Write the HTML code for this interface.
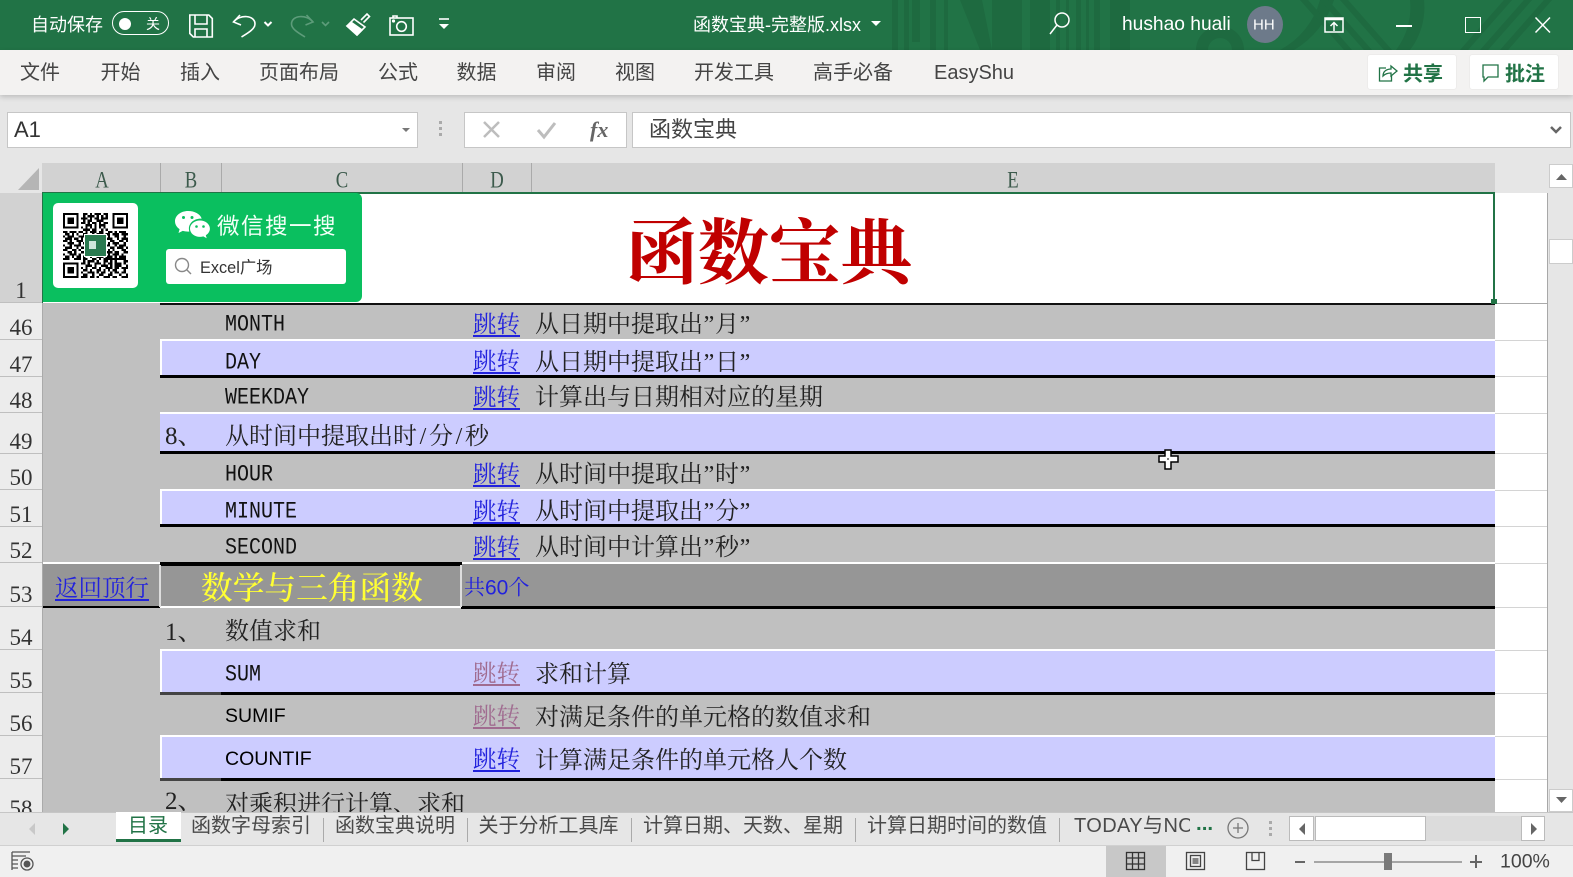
<!DOCTYPE html>
<html lang="zh"><head><meta charset="utf-8"><title>函数宝典-完整版.xlsx</title>
<style>
html,body{margin:0;padding:0;width:1573px;height:877px;overflow:hidden;background:#e6e6e6}
body{position:relative;font-family:"Liberation Sans","Noto Sans CJK SC",sans-serif}
div,span,a,svg{position:absolute;display:block}
span span{position:static;display:inline}
span .h{display:inline-block;width:12px;text-align:center}
.t{white-space:nowrap;transform:translateY(-50%)}
.rb{font-size:20px;color:#444;top:73px;line-height:28px}
.tb{font-size:20px;color:#4a4a4a;top:826px;line-height:28px}
.sep{top:818px;width:1px;height:24px;background:#aaa}
.hd{font-family:"Liberation Serif","Noto Serif CJK SC",serif;font-size:22px;color:#3c5a4c;top:180px;transform:translate(-50%,-50%) scale(.85,1.05);line-height:24px}
.rn{left:0;width:42px;text-align:center;font-family:"Liberation Serif",serif;font-size:23px;color:#333;background:#ececec;box-sizing:border-box;border-bottom:1px solid #bfbfbf;display:flex;align-items:flex-end;justify-content:center;line-height:23px;padding-bottom:0}
.g{left:42px;width:1453px;background:#c0c0c0}
.l{left:160px;width:1335px;background:#ccccff}
.k{background:#000;height:3px;left:160px;width:1335px}
.w{background:#fff;height:2px;left:160px;width:1335px}
.c{font-family:"Liberation Serif","Noto Serif CJK SC",serif;font-size:24px;color:#222;white-space:nowrap;transform:translateY(-50%);line-height:30px}
.m{font-family:"Liberation Mono",monospace;font-size:20px;color:#111;left:225px;white-space:nowrap;transform:translateY(-50%) scaleY(1.15);line-height:26px}
.a{font-family:"Liberation Sans",sans-serif;font-size:19.500px;color:#000;left:225px;white-space:nowrap;transform:translateY(-50%);line-height:26px}
.j{font-family:"Noto Serif CJK SC",serif;font-size:23.500px;color:#2222dd;left:473px;text-decoration:underline;text-underline-offset:3px;white-space:nowrap;transform:translateY(-50%);line-height:30px}
.v{color:#a06c90}
.d{left:535px}
.gl{left:1495px;width:52px;height:1px;background:#d4d4d4}
</style></head><body>

<!-- title bar -->
<div style="left:0;top:0;width:1573px;height:50px;background:#217346;overflow:hidden">
<svg width="1573" height="50" style="left:0;top:0" fill="#1e6a40">
<path d="M892 0h6v50h-6zM904 0h5v50h-5zM912 0h8v42h-8zM930 0h6v50h-6zM944 0h4v50h-4zM960 0h22l10 50h-12z"/>
<path d="M992 0h30v50h-30zM1030 0h20v50h-20zM1056 0h4v50h-4zM1066 0h3v50h-3zM1076 0h5v50h-5zM1086 0h3v50h-3zM1094 0h6v50h-6zM1110 0h20v50h-20z"/>
<path d="M1196 50a24 24 0 0 1 48 0h-12a12 12 0 0 0-24 0z"/>
<path d="M1280 50a80 80 0 0 0 40-50h14a90 90 0 0 1-40 50zM1410 0h14a70 70 0 0 1-14 50h-14a70 70 0 0 0 14-50z"/>
<path d="M1300 0h8l44 50h-8zM1320 0h8l44 50h-8zM1340 0h8l44 50h-8zM1460 50l44-50h8l-44 50zM1480 50l44-50h8l-44 50zM1500 50l44-50h8l-44 50z"/>
</svg>
</div>
<span class="t" style="left:31px;top:24px;font-size:18px;color:#fff">自动保存</span>
<div style="left:112px;top:11px;width:55px;height:22px;border:1.500px solid #fff;border-radius:13px"></div>
<div style="left:119px;top:18px;width:12px;height:12px;border-radius:50%;background:#fff"></div>
<span class="t" style="left:146px;top:24px;font-size:14px;color:#fff">关</span>
<svg width="470" height="50" style="left:0;top:0" fill="none" stroke="#fff" stroke-width="1.600">
<path d="M189.800 15h19l3.500 3.500V37h-19l-3.500-3.500z"/><path d="M195 15v9h12v-9M195 37v-8h12v8"/>
<path d="M240 15l-6.500 7 7.500 3"/><path d="M233.500 22C240 14 255 15 255 24c0 5-7 9-13.500 13"/>
<path d="M264.500 22l3.500 3.500 3.500-3.500" stroke-width="2"/>
<g stroke="#5d9c7a"><path d="M306.500 15l6.500 7-7.500 3"/><path d="M313 22C306.500 14 291.500 15 291.500 24c0 5 7 9 13.500 13"/><path d="M322 22l3.500 3.500 3.500-3.500" stroke-width="1.600"/></g>
<path d="M361 20l6-6 2.500 2.500-6 6M354 19l11 8M347 26l7-7 11 8-8 8z" fill="none"/><path d="M347 26l5-3 10 7-5 5z" fill="#fff"/>
<rect x="390" y="18" width="23" height="17"/><path d="M393 18v-2h4v2"/><circle cx="401.500" cy="26.500" r="4.800"/><circle cx="393.500" cy="21" r=".8" fill="#fff"/>
<path d="M439 19h10" stroke-width="1.600"/><path d="M439 24h10l-5 5z" fill="#fff" stroke="none"/>
</svg>
<span class="t" style="left:693px;top:24px;font-size:18px;color:#fff">函数宝典-完整版.xlsx</span>
<svg width="12" height="8" style="left:870px;top:20px"><path d="M1 1h10l-5 5z" fill="#fff"/></svg>
<svg width="24" height="26" style="left:1048px;top:11px" fill="none" stroke="#fff" stroke-width="1.500"><circle cx="14" cy="9" r="7"/><path d="M9 14L2 23"/></svg>
<span class="t" style="left:1122px;top:24.500px;font-size:19.200px;color:#fff">hushao huali</span>
<div style="left:1247px;top:6px;width:36px;height:37px;border-radius:50%;background:#6d7a8a"></div>
<span class="t" style="left:1253px;top:25px;font-size:15px;color:#fff">HH</span>
<svg width="24" height="20" style="left:1323px;top:14px" fill="none" stroke="#fff" stroke-width="1.500"><rect x="2" y="4" width="18" height="14"/><path d="M2 5h18" stroke-width="2.500"/><path d="M11 17V9M7.500 12l3.500-3.500 3.500 3.500"/></svg>
<div style="left:1396px;top:25px;width:16px;height:2px;background:#fff"></div>
<div style="left:1465px;top:17px;width:14px;height:14px;border:1.500px solid #fff"></div>
<svg width="18" height="18" style="left:1534px;top:16px" fill="none" stroke="#fff" stroke-width="1.500"><path d="M1.500 1.500l14.500 15M16 1.500L1.500 16.500"/></svg>

<!-- ribbon -->
<div style="left:0;top:50px;width:1573px;height:45px;background:#f3f2f1;box-shadow:0 2px 5px rgba(0,0,0,.18)"></div>
<span class="t rb" style="left:20px">文件</span><span class="t rb" style="left:100.500px">开始</span><span class="t rb" style="left:180px">插入</span><span class="t rb" style="left:259px">页面布局</span><span class="t rb" style="left:378px">公式</span><span class="t rb" style="left:456.500px">数据</span><span class="t rb" style="left:536px">审阅</span><span class="t rb" style="left:615px">视图</span><span class="t rb" style="left:694px">开发工具</span><span class="t rb" style="left:813px">高手必备</span><span class="t rb" style="left:934px">EasyShu</span>
<div style="left:1368px;top:55px;width:88px;height:34px;background:#fff;border-radius:2px;box-shadow:0 0 1px #ccc"></div>
<svg width="20" height="20" style="left:1378px;top:63px" fill="none" stroke="#217346" stroke-width="1.300"><path d="M8 5H1.500v13h12v-6"/><path d="M5 13c0-5 4-7 8-7V3l6 5-6 5v-3c-3 0-6 1-8 3z"/></svg>
<span class="t" style="left:1403px;top:71.500px;font-size:20px;font-weight:700;color:#217346">共享</span>
<div style="left:1470px;top:55px;width:88px;height:34px;background:#fff;border-radius:2px;box-shadow:0 0 1px #ccc"></div>
<svg width="20" height="20" style="left:1481px;top:63px" fill="none" stroke="#217346" stroke-width="1.300"><path d="M2 2h15v12H7l-4 4v-4H2z"/></svg>
<span class="t" style="left:1505px;top:71.500px;font-size:20px;font-weight:700;color:#217346">批注</span>

<!-- formula bar -->
<div style="left:7px;top:112px;width:411px;height:36px;box-sizing:border-box;background:#fff;border:1px solid #c6c6c6"></div>
<span class="t" style="left:14px;top:130px;font-size:22px;color:#333">A1</span>
<svg width="10" height="6" style="left:401px;top:127px"><path d="M1 1h8l-4 4z" fill="#777"/></svg>
<div style="left:439px;top:121px;width:3px;height:3px;background:#aaa;box-shadow:0 6px #aaa,0 12px #aaa"></div>
<div style="left:464px;top:112px;width:163px;height:36px;box-sizing:border-box;background:#fff;border:1px solid #c6c6c6"></div>
<svg width="22" height="20" style="left:482px;top:120px" fill="none" stroke="#bdbdbd" stroke-width="2.500"><path d="M2 2l15 15M17 2L2 17"/></svg>
<svg width="22" height="20" style="left:536px;top:120px" fill="none" stroke="#bdbdbd" stroke-width="3"><path d="M2 10l6 7L19 3"/></svg>
<span class="t" style="left:590px;top:130px;font-family:'Liberation Serif',serif;font-style:italic;font-weight:700;font-size:22px;color:#666">fx</span>
<div style="left:632px;top:112px;width:939px;height:36px;box-sizing:border-box;background:#fff;border:1px solid #c6c6c6"></div>
<span class="t" style="left:649px;top:128px;font-size:22px;color:#444">函数宝典</span>
<svg width="14" height="10" style="left:1549px;top:125px" fill="none" stroke="#666" stroke-width="2.500"><path d="M2 2l5 5 5-5"/></svg>

<!-- headers -->
<div style="left:0;top:163px;width:42px;height:30px;background:#e6e6e6"></div>
<svg width="24" height="24" style="left:17px;top:167px"><path d="M22 1v22H1z" fill="#b5b5b5"/></svg>
<div style="left:42px;top:163px;width:1453px;height:30px;background:#d2d2d2"></div>
<div style="left:160px;top:163px;width:1px;height:30px;background:#aaa"></div>
<div style="left:221px;top:163px;width:1px;height:30px;background:#aaa"></div>
<div style="left:462px;top:163px;width:1px;height:30px;background:#aaa"></div>
<div style="left:531px;top:163px;width:1px;height:30px;background:#aaa"></div>
<span class="hd" style="left:101.500px">A</span><span class="hd" style="left:190.500px">B</span><span class="hd" style="left:342px">C</span><span class="hd" style="left:496.500px">D</span><span class="hd" style="left:1013px">E</span>

<!-- right blank column + scrollbar -->
<div style="left:1495px;top:193px;width:52px;height:619px;background:#fff"></div>
<div style="left:1547px;top:193px;width:1px;height:619px;background:#a8a8a8"></div>
<div class="gl" style="top:303px;background:#aaa"></div><div class="gl" style="top:340px"></div><div class="gl" style="top:376px"></div><div class="gl" style="top:413px"></div><div class="gl" style="top:453px"></div><div class="gl" style="top:490px"></div><div class="gl" style="top:526px"></div><div class="gl" style="top:563px"></div><div class="gl" style="top:607px"></div><div class="gl" style="top:650px"></div><div class="gl" style="top:693px"></div><div class="gl" style="top:736px"></div><div class="gl" style="top:779px"></div>
<div style="left:1549px;top:164px;width:24px;height:24px;background:#fff;border:1px solid #ccc;box-sizing:border-box"></div>
<svg width="12" height="8" style="left:1556px;top:173px"><path d="M0 7h11L5.500 1z" fill="#666"/></svg>
<div style="left:1549px;top:239px;width:24px;height:25px;background:#fff;border:1px solid #ccc;box-sizing:border-box"></div>
<div style="left:1549px;top:789px;width:24px;height:23px;background:#fff;border:1px solid #ccc;box-sizing:border-box"></div>
<svg width="12" height="8" style="left:1556px;top:796px"><path d="M0 1h11L5.500 7z" fill="#666"/></svg>

<!-- row numbers -->
<div class="rn" style="top:193px;height:110px;background:#d2d2d2">1</div>
<div class="rn" style="top:303px;height:37px">46</div>
<div class="rn" style="top:340px;height:37px">47</div>
<div class="rn" style="top:377px;height:36px">48</div>
<div class="rn" style="top:413px;height:41px">49</div>
<div class="rn" style="top:454px;height:36px">50</div>
<div class="rn" style="top:490px;height:37px">51</div>
<div class="rn" style="top:527px;height:36px">52</div>
<div class="rn" style="top:563px;height:44px">53</div>
<div class="rn" style="top:607px;height:43px">54</div>
<div class="rn" style="top:650px;height:43px">55</div>
<div class="rn" style="top:693px;height:43px">56</div>
<div class="rn" style="top:736px;height:43px">57</div>
<div style="left:0;top:779px;width:42px;height:33px;background:#ececec;overflow:hidden"><span style="left:0;top:17px;width:42px;text-align:center;font-family:'Liberation Serif',serif;font-size:23px;color:#333;line-height:26px">58</span></div>
<div style="left:42px;top:193px;width:1px;height:619px;background:#aaa"></div>

<!-- cells -->
<div style="left:43px;top:193px;width:1452px;height:110px;background:#fff"></div>
<div class="g" style="left:43px;width:1452px;top:303px;height:509px"></div>
<div class="l" style="top:341px;height:34px"></div><div class="w" style="top:339px"></div><div style="left:160px;top:339px;width:2px;height:37px;background:#fff"></div><div class="k" style="top:375px"></div>
<div class="l" style="top:414px;height:38px"></div><div class="w" style="top:412px"></div><div class="k" style="top:451px"></div>
<div class="l" style="top:491px;height:34px"></div><div class="w" style="top:489px"></div><div style="left:160px;top:489px;width:2px;height:37px;background:#fff"></div><div class="k" style="top:524px"></div>
<div class="w" style="left:43px;width:1452px;top:562px"></div>
<div style="left:43px;top:564px;width:1452px;height:42px;background:#969696"></div>
<div class="k" style="left:160px;width:302px;top:562px;height:3.500px"></div>
<div class="k" style="left:43px;width:117px;top:605.500px;height:2.500px"></div>
<div class="k" style="left:461px;width:1034px;top:605.500px"></div>
<div style="left:160px;top:606px;width:301px;height:2px;background:#fff"></div>
<div style="left:159px;top:565px;width:1.500px;height:42px;background:#ddd"></div>
<div style="left:459.500px;top:565px;width:2px;height:42px;background:#ddd"></div>
<div class="l" style="top:651px;height:41px"></div><div class="w" style="top:649px"></div><div style="left:160px;top:649px;width:2px;height:44px;background:#fff"></div><div class="k" style="top:692px"></div><div class="k" style="top:692px;width:61px;background:#444"></div>
<div class="l" style="top:737px;height:41px"></div><div class="w" style="top:735px"></div><div style="left:160px;top:735px;width:2px;height:44px;background:#fff"></div><div class="k" style="top:778px"></div><div class="k" style="top:778px;width:61px;background:#444"></div>

<span class="m" style="top:326px">MONTH</span><a class="j" style="top:322px">跳转</a><span class="c d" style="top:325px">从日期中提取出<span class="h">”</span>月<span class="h">”</span></span>
<span class="m" style="top:364px">DAY</span><a class="j" style="top:359px">跳转</a><span class="c d" style="top:363px">从日期中提取出<span class="h">”</span>日<span class="h">”</span></span>
<span class="m" style="top:399px">WEEKDAY</span><a class="j" style="top:395px">跳转</a><span class="c d" style="top:398px">计算出与日期相对应的星期</span>
<span class="c" style="left:165px;top:437px;font-size:25px">8、</span><span class="c" style="left:225px;top:437px">从时间中提取出时<span class="h">/</span>分<span class="h">/</span>秒</span>
<span class="m" style="top:476px">HOUR</span><a class="j" style="top:472px">跳转</a><span class="c d" style="top:475px">从时间中提取出<span class="h">”</span>时<span class="h">”</span></span>
<span class="m" style="top:513px">MINUTE</span><a class="j" style="top:509px">跳转</a><span class="c d" style="top:512px">从时间中提取出<span class="h">”</span>分<span class="h">”</span></span>
<span class="m" style="top:549px">SECOND</span><a class="j" style="top:545px">跳转</a><span class="c d" style="top:548px">从时间中计算出<span class="h">”</span>秒<span class="h">”</span></span>
<a class="j" style="left:55px;top:586px">返回顶行</a>
<span class="c" style="left:201px;top:589px;font-size:31.700px;color:#ffff33;line-height:40px;font-weight:500">数学与三角函数</span>
<span class="c" style="left:464px;top:588px;font-size:21px;color:#2222dd">共<span style="font-family:'Liberation Sans',sans-serif">60</span>个</span>
<span class="c" style="left:165px;top:633px;font-size:25px">1、</span><span class="c" style="left:225px;top:632px">数值求和</span>
<span class="m" style="top:676px">SUM</span><a class="j v" style="top:671px">跳转</a><span class="c d" style="top:675px">求和计算</span>
<span class="a" style="top:716px">SUMIF</span><a class="j v" style="top:714px">跳转</a><span class="c d" style="top:718px">对满足条件的单元格的数值求和</span>
<span class="a" style="top:759px">COUNTIF</span><a class="j" style="top:757px">跳转</a><span class="c d" style="top:761px">计算满足条件的单元格人个数</span>
<div style="left:160px;top:781px;width:400px;height:31px;overflow:hidden"><span style="left:5px;top:6px;font-family:'Liberation Serif','Noto Serif CJK SC',serif;font-size:25px;color:#222;line-height:30px;white-space:nowrap">2、</span><span style="left:65px;top:6px;font-family:'Noto Serif CJK SC',serif;font-size:24px;color:#222;line-height:30px;white-space:nowrap">对乘积进行计算、求和</span></div>

<!-- selection -->
<div style="left:42px;top:192px;width:1453px;height:111px;box-sizing:border-box;border:2px solid #217346;border-left:1px solid #217346;border-bottom:0"></div>
<div style="left:160px;top:303px;width:1335px;height:1.500px;background:#111"></div>
<div style="left:1491px;top:299px;width:6px;height:5px;background:#217346"></div>

<!-- title -->
<span class="t" style="left:626px;top:248px;font-family:'Noto Serif CJK SC',serif;font-weight:700;font-size:71.500px;color:#c00000;line-height:90px">函数宝典</span>

<!-- green card -->
<div style="left:43px;top:193px;width:319px;height:109px;background:#0abf5f;border-radius:0 6px 6px 0"></div>
<div style="left:53px;top:203px;width:85px;height:85px;background:#fff;border-radius:5px"></div>
<svg width="65" height="65" viewBox="0 0 29 29" style="left:63px;top:213px" shape-rendering="crispEdges">
<path fill="none" stroke="#000" d="M9 .5h2M12 .5h1M14 .5h3M18 .5h2M9 1.500h1M11 1.500h3M15 1.500h1M17 1.500h1M19 1.500h1M8 2.500h3M12 2.500h1M14 2.500h2M17 2.500h3M9 3.500h1M11 3.500h2M15 3.500h3M8 4.500h2M11 4.500h1M13 4.500h2M16 4.500h1M18 4.500h2M10 5.500h3M14 5.500h1M16 5.500h3M8 6.500h1M10 6.500h1M12 6.500h1M14 6.500h1M16 6.500h1M18 6.500h1M9 7.500h3M13 7.500h2M17 7.500h1M19 7.500h1M0 8.500h2M3 8.500h3M7 8.500h2M10 8.500h1M12 8.500h3M16 8.500h2M20 8.500h2M23 8.500h1M25 8.500h3M1 9.500h2M4 9.500h1M6 9.500h1M9 9.500h2M13 9.500h1M15 9.500h3M19 9.500h2M22 9.500h3M26 9.500h3M0 10.500h1M2 10.500h3M7 10.500h3M11 10.500h2M14 10.500h1M17 10.500h1M20 10.500h1M23 10.500h2M27 10.500h1M1 11.500h3M5 11.500h2M8 11.500h1M10 11.500h1M19 11.500h3M24 11.500h1M26 11.500h3M0 12.500h2M3 12.500h1M6 12.500h3M21 12.500h2M25 12.500h2M28 12.500h1M2 13.500h3M7 13.500h1M9 13.500h1M20 13.500h1M22 13.500h3M27 13.500h1M0 14.500h1M3 14.500h1M5 14.500h3M19 14.500h2M23 14.500h1M25 14.500h3M1 15.500h3M6 15.500h1M8 15.500h2M21 15.500h2M24 15.500h3M28 15.500h1M0 16.500h2M4 16.500h2M7 16.500h1M20 16.500h1M22 16.500h1M26 16.500h2M2 17.500h2M5 17.500h1M8 17.500h3M19 17.500h3M23 17.500h2M27 17.500h2M0 18.500h1M3 18.500h3M7 18.500h1M10 18.500h3M14 18.500h2M17 18.500h1M20 18.500h1M22 18.500h3M26 18.500h1M1 19.500h2M4 19.500h1M6 19.500h2M9 19.500h1M12 19.500h1M15 19.500h3M19 19.500h3M23 19.500h1M25 19.500h3M0 20.500h3M5 20.500h3M9 20.500h2M13 20.500h2M16 20.500h1M18 20.500h3M21 20.500h7M9 21.500h1M11 21.500h3M15 21.500h1M18 21.500h2M21 21.500h1M23 21.500h1M27 21.500h2M8 22.500h2M11 22.500h1M14 22.500h3M18 22.500h1M20 22.500h2M23 22.500h3M27 22.500h1M10 23.500h3M14 23.500h1M17 23.500h3M21 23.500h1M23 23.500h3M28 23.500h1M8 24.500h1M10 24.500h1M13 24.500h2M16 24.500h1M19 24.500h3M23 24.500h2M26 24.500h3M9 25.500h2M12 25.500h1M15 25.500h2M18 25.500h1M20 25.500h1M22 25.500h2M27 25.500h1M8 26.500h1M11 26.500h3M15 26.500h1M17 26.500h2M21 26.500h1M23 26.500h2M26 26.500h2M9 27.500h2M13 27.500h1M16 27.500h2M20 27.500h2M25 27.500h1M28 27.500h1M8 28.500h3M12 28.500h2M15 28.500h1M18 28.500h3M22 28.500h2M26 28.500h3"/>
<path fill="#000" d="M0 0h7v7H0zM22 0h7v7h-7zM0 22h7v7H0z"/>
<path fill="#fff" d="M1 1h5v5H1zM23 1h5v5h-5zM1 23h5v5H1z"/>
<path fill="#000" d="M2 2h3v3H2zM24 2h3v3h-3zM2 24h3v3H2z"/>
</svg>
<div style="left:84px;top:234px;width:23px;height:23px;background:#2a7a50;border:1px solid #fff;box-sizing:border-box"></div>
<div style="left:89px;top:241px;width:7px;height:8px;background:#cfe6da"></div>
<svg width="38" height="32" style="left:174px;top:210px" fill="#fff">
<path d="M14 1C6.800 1 1 5.600 1 11.300c0 3.200 1.800 6 4.600 7.900L4.500 23l4.200-2.100c1.600.4 3.500.7 5.300.7.400 0 .9 0 1.300-.1-.3-1-.4-1.900-.4-2.900 0-5.600 5.200-10 11.600-10 .4 0 .8 0 1.200.1C26.300 4.100 20.700 1 14 1z"/>
<path d="M26 10.500c-5.500 0-10 3.700-10 8.200s4.500 8.200 10 8.200c1.200 0 2.300-.2 3.300-.5l3.400 1.900-.9-3.100c2.500-1.500 4.100-3.900 4.100-6.500 0-4.500-4.400-8.200-9.900-8.200z"/>
<circle cx="9.500" cy="7.500" r="1.500" fill="#0abf5f"/><circle cx="18" cy="7.500" r="1.500" fill="#0abf5f"/><circle cx="22.500" cy="16.500" r="1.300" fill="#0abf5f"/><circle cx="29.500" cy="16.500" r="1.300" fill="#0abf5f"/>
</svg>
<span class="t" style="left:217px;top:225px;font-size:22.500px;color:#f2fff7;letter-spacing:1.500px;font-weight:400">微信搜一搜</span>
<div style="left:165.500px;top:249px;width:180px;height:35px;background:#fff;border-radius:3px"></div>
<svg width="20" height="20" style="left:174px;top:257px" fill="none" stroke="#888" stroke-width="1.400"><circle cx="8" cy="8" r="6.500"/><path d="M12.500 12.500l4.500 4.500"/></svg>
<span class="t" style="left:200px;top:266px;font-size:16.300px;color:#333">Excel广场</span>

<!-- tab bar -->
<div style="left:0;top:812px;width:1573px;height:33px;background:#e6e6e6;border-top:1px solid #c6c6c6;box-sizing:border-box"></div>
<div style="left:0;top:845px;width:1573px;height:32px;background:#f0f0f0;border-top:1px solid #d0d0d0;box-sizing:border-box"></div>
<svg width="10" height="14" style="left:28px;top:822px"><path d="M7 1v12L1 7z" fill="#c8c8c8"/></svg>
<svg width="10" height="14" style="left:62px;top:822px"><path d="M1 1v12l6-6z" fill="#217346"/></svg>
<div style="left:115.500px;top:812px;width:65px;height:30px;background:#fff;border-bottom:3px solid #217346;box-sizing:border-box"></div>
<span class="t tb" style="left:128px;color:#217346">目录</span>
<span class="t tb" style="left:191px">函数字母索引</span><div class="sep" style="left:323px"></div>
<span class="t tb" style="left:335px">函数宝典说明</span><div class="sep" style="left:467px"></div>
<span class="t tb" style="left:478.500px">关于分析工具库</span><div class="sep" style="left:631px"></div>
<span class="t tb" style="left:643px">计算日期、天数、星期</span><div class="sep" style="left:855px"></div>
<span class="t tb" style="left:867px">计算日期时间的数值</span><div class="sep" style="left:1059px"></div>
<div style="left:1074px;top:812px;width:116px;height:30px;overflow:hidden"><span style="left:0;top:0;font-size:20px;letter-spacing:.4px;color:#4a4a4a;white-space:nowrap;line-height:28px">TODAY与NOW</span></div>
<span class="t" style="left:1196px;top:824px;font-size:20.500px;font-weight:700;color:#217346">...</span>
<svg width="24" height="24" style="left:1226px;top:816px" fill="none" stroke="#777" stroke-width="1.300"><circle cx="12" cy="12" r="10"/><path d="M12 7v10M7 12h10"/></svg>
<div style="left:1269px;top:821px;width:3px;height:3px;background:#aaa;box-shadow:0 6px #aaa,0 12px #aaa"></div>
<div style="left:1289px;top:816px;width:256px;height:25px;background:#dcdcdc"></div>
<div style="left:1289px;top:816px;width:25px;height:25px;background:#fff;border:1px solid #bbb;box-sizing:border-box"></div>
<svg width="8" height="12" style="left:1298px;top:823px"><path d="M7 0v12L1 6z" fill="#666"/></svg>
<div style="left:1315px;top:816px;width:111px;height:25px;background:#fff;border:1px solid #bbb;box-sizing:border-box"></div>
<div style="left:1521px;top:816px;width:24px;height:25px;background:#fff;border:1px solid #bbb;box-sizing:border-box"></div>
<svg width="8" height="12" style="left:1530px;top:823px"><path d="M1 0v12l6-6z" fill="#666"/></svg>

<!-- status bar -->
<svg width="26" height="24" style="left:10px;top:850px" fill="none" stroke="#555" stroke-width="1.300"><path d="M2 2h18M2 6h14M2 10h6M2 14h6M2 18h6M2 2v18"/><circle cx="17" cy="14" r="6"/><circle cx="17" cy="14" r="2.800" fill="#555"/></svg>
<div style="left:1106px;top:846px;width:60px;height:31px;background:#c8c8c8"></div>
<svg width="22" height="20" style="left:1125px;top:851px" fill="none" stroke="#333" stroke-width="1.300"><rect x="1.500" y="1.500" width="18" height="17"/><path d="M7.500 1.500v17M13.500 1.500v17M1.500 7h18M1.500 13h18"/></svg>
<svg width="22" height="20" style="left:1185px;top:851px" fill="none" stroke="#444" stroke-width="1.300"><rect x="1.500" y="1.500" width="18" height="17"/><rect x="5.500" y="4.500" width="10" height="11"/><path d="M7.500 8h6M7.500 10h6M7.500 12h6"/></svg>
<svg width="22" height="20" style="left:1245px;top:851px" fill="none" stroke="#444" stroke-width="1.300"><rect x="1.500" y="1.500" width="18" height="17"/><path d="M7 1.500v8h7v-8"/></svg>
<div style="left:1295px;top:861px;width:10px;height:1.500px;background:#666"></div>
<div style="left:1314px;top:861px;width:148px;height:2px;background:#a6a6a6"></div>
<div style="left:1384px;top:853px;width:8px;height:17px;background:#7a7a7a"></div>
<div style="left:1470px;top:861px;width:12px;height:1.500px;background:#666"></div>
<div style="left:1475.300px;top:855px;width:1.500px;height:13px;background:#666"></div>
<span class="t" style="left:1500px;top:862px;font-size:19.500px;color:#444">100%</span>

<!-- cursor -->
<svg width="24" height="24" style="left:1157px;top:448px"><path d="M8 2h6v6h7v6h-7v7H8v-7H2V8h6z" fill="#fff" stroke="#000" stroke-width="1.500"/><path d="M10 11h2" stroke="#000" stroke-width="1"/></svg>
</body></html>
